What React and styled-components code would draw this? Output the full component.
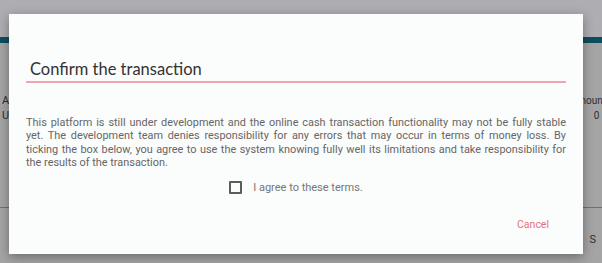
import React, { useState } from 'react';
import styled, { createGlobalStyle } from 'styled-components';

const GlobalStyle = createGlobalStyle`
    html, body {
        margin: 0;
        padding: 0;
        background: #a4a4a5;
    }
    * {
        box-sizing: border-box;
    }
`

const Page = styled.div`
    position: relative;
    width: 602px;
    height: 263px;
    overflow: hidden;
    background: #a4a4a5;
    font-family: Roboto, "Liberation Sans", sans-serif;
`

const TopBar = styled.div`
    height: 37px;
    background: #adadb2;
`

const AccentBar = styled.div`
    height: 6px;
    background: #0e4d5e;
`

const Table = styled.div`
    padding-top: 51px;
    overflow: hidden;
`

const TableRow = styled.div`
    display: flex;
    justify-content: space-between;
    height: ${p => p.$height || 'auto'};
    border-bottom: ${p => p.$rule ? '1px solid #6f6f70' : 'none'};
`

const Cell = styled.div`
    display: flex;
    flex-direction: column;
    gap: 2px;
    padding-left: ${p => p.$right ? '0' : '2px'};
    margin-right: ${p => p.$right ? '-4px' : '0'};
    font-size: ${p => p.$right ? '10px' : '11px'};
    line-height: 13px;
    color: #2e2e2f;
`

const Value = styled.span`
    padding-left: ${p => p.$indent || 0};
`

const Footnote = styled.div`
    display: flex;
    justify-content: flex-end;
    padding: 25px 6px 0 0;
    font-size: 11px;
    line-height: 13px;
    color: #2e2e2f;
`

const Dialog = styled.div`
    position: absolute;
    left: 9px;
    top: 14px;
    width: 574px;
    height: 240px;
    background: #fbfcfc;
    box-shadow: 0 3px 10px rgba(0, 0, 0, 0.35);
    padding: 43px 17px 0 17px;
    display: flex;
    flex-direction: column;
`

const Title = styled.h2`
    margin: 0;
    padding-left: 4px;
    font-family: Lato, "Open Sans", sans-serif;
    font-weight: 400;
    font-size: 16.5px;
    line-height: 24px;
    color: #333;
    border-bottom: 2px solid #eda7ad;
`

const Body = styled.div`
    margin-top: 33px;
    display: flex;
    flex-direction: column;
    font-size: 10.9px;
    line-height: 13.3px;
    color: #666;
`

const Line = styled.div`
    width: 100%;
    white-space: nowrap;
    text-align: ${p => p.$last ? 'left' : 'justify'};
    text-align-last: ${p => p.$last ? 'left' : 'justify'};
    word-spacing: ${p => p.$last ? '0' : '-1.5px'};
`

const AgreeRow = styled.label`
    display: flex;
    align-items: center;
    justify-content: center;
    gap: 11px;
    margin-top: 12px;
    font-size: 11px;
    color: #777;
    cursor: pointer;
`

const Box = styled.span`
    width: 13px;
    height: 13px;
    border: 2px solid #5c5c5c;
    border-radius: 1px;
    background: ${p => p.$checked ? '#5c5c5c' : 'transparent'};
`

const Footer = styled.div`
    display: flex;
    justify-content: flex-end;
    margin-top: 18px;
`

const CancelButton = styled.button`
    border: none;
    background: none;
    padding: 6px 17px 6px 10px;
    font-family: Roboto, "Liberation Sans", sans-serif;
    font-size: 10.5px;
    color: #e8707c;
    cursor: pointer;
`

const lines = [
    'This platform is still under development and the online cash transaction functionality may not be fully stable',
    'yet. The development team denies responsibility for any errors that may occur in terms of money loss. By',
    'ticking the box below, you agree to use the system knowing fully well its limitations and take responsibility for',
    'the results of the transaction.',
]

const App = () => {
    const [agreed, setAgreed] = useState(false)

    return (
        <Page>
            <GlobalStyle />
            <TopBar />
            <AccentBar />
            <Table>
                <TableRow $height="21px">
                    <Cell>
                        <span>Account</span>
                        <span>USD</span>
                    </Cell>
                    <Cell $right>
                        <span>Amount</span>
                        <Value $indent="23px">0</Value>
                    </Cell>
                </TableRow>
                <TableRow $height="93px" $rule />
                <Footnote>S</Footnote>
            </Table>

            <Dialog>
                <Title>Confirm the transaction</Title>
                <Body>
                    {lines.map((text, i) => (
                        <Line key={i} $last={i === lines.length - 1}>{text}</Line>
                    ))}
                </Body>
                <AgreeRow onClick={() => setAgreed(!agreed)}>
                    <Box $checked={agreed} />
                    I agree to these terms.
                </AgreeRow>
                <Footer>
                    <CancelButton>Cancel</CancelButton>
                </Footer>
            </Dialog>
        </Page>
    )
}

export default App;
